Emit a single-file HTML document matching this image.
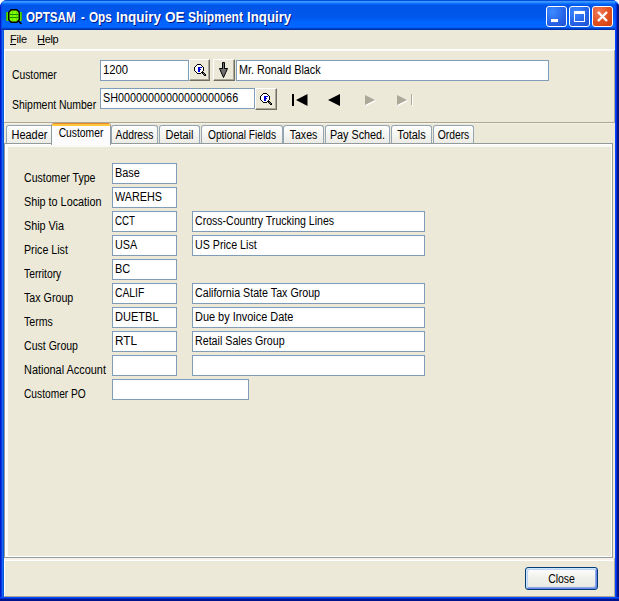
<!DOCTYPE html>
<html><head><meta charset="utf-8">
<style>
*{margin:0;padding:0;box-sizing:border-box}
html,body{width:619px;height:601px;overflow:hidden;background:#fff}
body{position:relative;font-family:"Liberation Sans",sans-serif;font-size:11px;color:#000}
.a{position:absolute}
.t{position:absolute;white-space:pre;line-height:13px}
.edit{position:absolute;background:#fff;border:1px solid #7f9db9;height:21px}
.edit span{position:absolute;left:2px;top:3px;white-space:pre;line-height:13px}
.btn{position:absolute;background:#ece9d8;border-top:1px solid #fff;border-left:1px solid #fff;border-right:1px solid #716f64;border-bottom:1px solid #716f64;box-shadow:inset -1px -1px #aca899}
.tab{position:absolute;top:125px;height:18px;border:1px solid #94a6b4;border-bottom:none;border-radius:3px 3px 0 0;background:linear-gradient(180deg,#fff,#f3f3ef 60%,#ecebe6)}
.tab span{position:absolute;left:0;right:0;text-align:center;top:3px;white-space:pre;line-height:13px}
.lbl{position:absolute;left:24px;white-space:pre;line-height:13px}
</style></head><body>
<div class="a" style="left:0;top:0;width:619px;height:601px;background:#0831d9;border-radius:7px 7px 0 0;overflow:hidden">
<div class="a" style="left:0;top:0;width:619px;height:30px;background:linear-gradient(180deg,#0050e0 0px,#0050e0 1px,#3d95ff 1px,#3d95ff 2px,#2d8bff 2px,#2d8bff 3px,#0a72ff 3px,#0a72ff 4px,#0062f2 4px,#0062f2 5px,#0055e8 5px,#0057ec 17px,#005cf4 19px,#0062fa 21px,#0066ff 22px,#0066ff 27px,#005cf4 27px,#005cf4 28px,#0044cc 28px,#0044cc 29px,#0030a8 29px,#0030a8 30px)"></div>
<div class="a" style="left:0;top:5px;width:1px;height:596px;background:#0019cf"></div>
<div class="a" style="left:1px;top:3px;width:1px;height:27px;background:#0838e0;opacity:.6"></div>
<div class="a" style="left:1px;top:30px;width:1px;height:571px;background:#0838e0"></div>
<div class="a" style="left:2px;top:30px;width:1px;height:571px;background:#166aee"></div>
<div class="a" style="left:3px;top:30px;width:1px;height:571px;background:#0855dd"></div>
<div class="a" style="left:615px;top:30px;width:1px;height:571px;background:#0048ff"></div>
<div class="a" style="left:616px;top:30px;width:1px;height:571px;background:#0030d8"></div>
<div class="a" style="left:617px;top:4px;width:2px;height:597px;background:#00138c"></div>
<div class="a" style="left:616px;top:3px;width:1px;height:27px;background:#0030d8"></div>
<div class="a" style="left:615px;top:2px;width:1px;height:28px;background:#0048ff;opacity:.7"></div>
<div class="a" style="left:0;top:597px;width:619px;height:1px;background:#0048ff"></div>
<div class="a" style="left:0;top:598px;width:619px;height:1px;background:#0030d0"></div>
<div class="a" style="left:0;top:599px;width:619px;height:2px;background:#00138c"></div>
<div class="a" style="left:4px;top:30px;width:611px;height:567px;background:#ece9d8"></div>
</div>
<svg class="a" style="left:0;top:0" width="30" height="30" viewBox="0 0 30 30">
<rect x="6" y="12" width="16" height="9" fill="#5cd800"/>
<rect x="6" y="12" width="1" height="9" fill="#2a9a00" opacity=".6"/>
<rect x="21" y="12" width="1" height="9" fill="#2a9a00" opacity=".6"/>
<path d="M11.2 9.75 H16.8 L19.25 12.2 V19.8 L16.8 22.25 H11.2 L8.75 19.8 V12.2 Z" fill="#80ff00" stroke="#000" stroke-width="1.5"/>
<rect x="9.5" y="14" width="9" height="1" fill="#128a00"/>
<rect x="9.5" y="17" width="9" height="1" fill="#128a00"/>
<rect x="12" y="11" width="1" height="10" fill="#48c000" opacity=".5"/>
<rect x="16" y="11" width="1" height="10" fill="#48c000" opacity=".5"/>
<path d="M18.5 21 L21.5 24" stroke="#000" stroke-width="1.6"/>
</svg>
<div class="t" style="left:27.10px;top:10px;font-weight:bold;font-size:14px;line-height:16px;color:#001a8c;transform:scaleX(0.827);transform-origin:0 0">OPTSAM</div>
<div class="t" style="left:26.10px;top:9px;font-weight:bold;font-size:14px;line-height:16px;color:#fff;transform:scaleX(0.827);transform-origin:0 0">OPTSAM</div>
<div class="t" style="left:82.40px;top:10px;font-weight:bold;font-size:14px;line-height:16px;color:#001a8c;transform:scaleX(0.8);transform-origin:0 0">-</div>
<div class="t" style="left:81.40px;top:9px;font-weight:bold;font-size:14px;line-height:16px;color:#fff;transform:scaleX(0.8);transform-origin:0 0">-</div>
<div class="t" style="left:89.70px;top:10px;font-weight:bold;font-size:14px;line-height:16px;color:#001a8c;transform:scaleX(0.837);transform-origin:0 0">Ops</div>
<div class="t" style="left:88.70px;top:9px;font-weight:bold;font-size:14px;line-height:16px;color:#fff;transform:scaleX(0.837);transform-origin:0 0">Ops</div>
<div class="t" style="left:116.53px;top:10px;font-weight:bold;font-size:14px;line-height:16px;color:#001a8c;transform:scaleX(0.965);transform-origin:0 0">Inquiry</div>
<div class="t" style="left:115.53px;top:9px;font-weight:bold;font-size:14px;line-height:16px;color:#fff;transform:scaleX(0.965);transform-origin:0 0">Inquiry</div>
<div class="t" style="left:165.90px;top:10px;font-weight:bold;font-size:14px;line-height:16px;color:#001a8c;transform:scaleX(0.97);transform-origin:0 0">OE</div>
<div class="t" style="left:164.90px;top:9px;font-weight:bold;font-size:14px;line-height:16px;color:#fff;transform:scaleX(0.97);transform-origin:0 0">OE</div>
<div class="t" style="left:189.34px;top:10px;font-weight:bold;font-size:14px;line-height:16px;color:#001a8c;transform:scaleX(0.862);transform-origin:0 0">Shipment</div>
<div class="t" style="left:188.34px;top:9px;font-weight:bold;font-size:14px;line-height:16px;color:#fff;transform:scaleX(0.862);transform-origin:0 0">Shipment</div>
<div class="t" style="left:247.75px;top:10px;font-weight:bold;font-size:14px;line-height:16px;color:#001a8c;transform:scaleX(0.948);transform-origin:0 0">Inquiry</div>
<div class="t" style="left:246.75px;top:9px;font-weight:bold;font-size:14px;line-height:16px;color:#fff;transform:scaleX(0.948);transform-origin:0 0">Inquiry</div>
<div class="a" style="left:546px;top:6px;width:21px;height:21px;border:1px solid #fff;border-radius:3px;background:radial-gradient(circle at 30% 25%,#3c8cff,#2662e8 60%,#1f4fd0)"></div>
<div class="a" style="left:551px;top:19px;width:7px;height:3px;background:#fff"></div>
<div class="a" style="left:569px;top:6px;width:21px;height:21px;border:1px solid #fff;border-radius:3px;background:radial-gradient(circle at 30% 25%,#3c8cff,#2662e8 60%,#1f4fd0)"></div>
<div class="a" style="left:574px;top:11px;width:11px;height:11px;border:1px solid #fff;border-top-width:3px"></div>
<div class="a" style="left:592px;top:6px;width:21px;height:21px;border:1px solid #fff;border-radius:3px;background:radial-gradient(circle at 30% 25%,#f07a58,#e2501f 55%,#cc3f12)"></div>
<svg class="a" style="left:592px;top:6px" width="21" height="21"><path d="M6 6 L15 15 M15 6 L6 15" stroke="#fff" stroke-width="2.4"/></svg>
<div class="t" style="left:10px;top:33px;letter-spacing:-0.23px">File</div>
<div class="a" style="left:10px;top:44px;width:6px;height:1px;background:#000"></div>
<div class="t" style="left:37px;top:33px;letter-spacing:-0.3px">Help</div>
<div class="a" style="left:38px;top:44px;width:7px;height:1px;background:#000"></div>
<div class="a" style="left:4px;top:49px;width:611px;height:1px;background:#fff"></div>
<div class="a" style="left:4px;top:50px;width:610px;height:1px;background:#fbfaf4"></div>
<div class="a" style="left:4px;top:122px;width:611px;height:1px;background:#aca899"></div>
<div class="a" style="left:614px;top:50px;width:1px;height:72px;background:#aca899"></div>
<div class="a" style="left:4px;top:50px;width:1px;height:72px;background:#fff"></div>
<div class="a" style="left:4px;top:123px;width:610px;height:1px;background:#f6f3e6"></div>
<div class="lbl" style="left:12px;top:69px;font-size:12px;transform:scaleX(0.860);transform-origin:0 0;">Customer</div>
<div class="lbl" style="left:12px;top:99px;font-size:12px;transform:scaleX(0.870);transform-origin:0 0;">Shipment Number</div>
<div class="edit" style="left:100px;top:60px;width:89px;height:21px"><span style="font-size:12px;transform:scaleX(0.940);transform-origin:0 0;">1200</span></div>
<div class="btn" style="left:189px;top:59px;width:21px;height:22px"></div>
<div class="btn" style="left:213px;top:59px;width:22px;height:22px"></div>
<div class="edit" style="left:236px;top:60px;width:313px;height:21px"><span style="font-size:12px;transform:scaleX(0.900);transform-origin:0 0;">Mr. Ronald Black</span></div>
<div class="edit" style="left:100px;top:88px;width:155px;height:21px"><span style="font-size:12px;transform:scaleX(0.900);transform-origin:0 0;">SH00000000000000000066</span></div>
<div class="btn" style="left:255px;top:88px;width:22px;height:22px"></div>
<svg class="a" style="left:189px;top:59px" width="22" height="22" viewBox="0 0 22 22" shape-rendering="crispEdges">
<path d="M8 5h4v1h1v1h1v1h1v4h-1v1h-1v1h-1v1h-4v-1h-1v-1h-1v-1h-1v-4h1v-1h1v-1h1z" fill="#fff"/>
<path d="M8 5h4v1h-4zM7 6h1v1h-1zM12 6h1v1h-1zM6 7h1v1h-1zM13 7h1v1h-1zM5 8h1v4h-1zM14 8h1v4h-1zM6 12h1v1h-1zM13 12h1v1h-1zM7 13h1v1h-1zM12 13h1v1h-1zM8 14h4v1h-4z" fill="#000"/>
<path d="M9 8h4v1h-2v1h1v1h-1v2h-2z" fill="#0000d8"/>
<path d="M13 13h2v1h1v1h1v2h-2v-1h-1v-1h-1z" fill="#000"/>
<path d="M14 14h1v1h-1zM15 15h1v1h-1z" fill="#808080"/>
</svg>
<svg class="a" style="left:255px;top:88px" width="22" height="22" viewBox="0 0 22 22" shape-rendering="crispEdges">
<path d="M8 5h4v1h1v1h1v1h1v4h-1v1h-1v1h-1v1h-4v-1h-1v-1h-1v-1h-1v-4h1v-1h1v-1h1z" fill="#fff"/>
<path d="M8 5h4v1h-4zM7 6h1v1h-1zM12 6h1v1h-1zM6 7h1v1h-1zM13 7h1v1h-1zM5 8h1v4h-1zM14 8h1v4h-1zM6 12h1v1h-1zM13 12h1v1h-1zM7 13h1v1h-1zM12 13h1v1h-1zM8 14h4v1h-4z" fill="#000"/>
<path d="M9 8h4v1h-2v1h1v1h-1v2h-2z" fill="#0000d8"/>
<path d="M13 13h2v1h1v1h1v2h-2v-1h-1v-1h-1z" fill="#000"/>
<path d="M14 14h1v1h-1zM15 15h1v1h-1z" fill="#808080"/>
</svg>
<svg class="a" style="left:213px;top:59px" width="22" height="22" viewBox="0 0 22 22">
<path d="M9.5 3.5 H11.5 V9.5 H14.5 L10.5 18.5 L6.5 9.5 H9.5 Z" fill="#707070" stroke="#000" stroke-width="1"/>
</svg>
<svg class="a" style="left:285px;top:88px" width="140" height="22" viewBox="0 0 140 22">
<rect x="7" y="6" width="2" height="12" fill="#000"/>
<path d="M11 12 L22.5 6 V18 Z" fill="#000"/>
<path d="M43 12 L55 6 V18 Z" fill="#000"/>
<path d="M81 8 L91 13 L81 18 Z" fill="#fff"/>
<path d="M80 7 L90 12 L80 17 Z" fill="#aca899"/>
<path d="M113 8 L123 13 L113 18 Z" fill="#fff"/>
<path d="M112 7 L122 12 L112 17 Z" fill="#aca899"/>
<rect x="127" y="7" width="1" height="11" fill="#fff"/>
<rect x="126" y="6" width="1" height="11" fill="#aca899"/>
</svg>
<div class="a" style="left:4px;top:143px;width:609px;height:415px;border:1px solid #919b9c;background:#fff"></div>
<div class="a" style="left:6px;top:145px;width:605px;height:411px;background:#fafaf7"></div>
<div class="a" style="left:8px;top:147px;width:603px;height:409px;background:#ece9d8"></div>
<div class="tab" style="left:6px;width:47px"><span style="font-size:12px;transform:scaleX(0.910);transform-origin:50% 0;">Header</span></div>
<div class="tab" style="left:111px;width:47px"><span style="font-size:12px;transform:scaleX(0.860);transform-origin:50% 0;">Address</span></div>
<div class="tab" style="left:159px;width:41px"><span style="font-size:12px;transform:scaleX(0.910);transform-origin:50% 0;">Detail</span></div>
<div class="tab" style="left:201px;width:82px"><span style="font-size:12px;transform:scaleX(0.850);transform-origin:50% 0;">Optional Fields</span></div>
<div class="tab" style="left:283px;width:41px"><span style="font-size:12px;transform:scaleX(0.880);transform-origin:50% 0;">Taxes</span></div>
<div class="tab" style="left:325px;width:65px"><span style="font-size:12px;transform:scaleX(0.900);transform-origin:50% 0;">Pay Sched.</span></div>
<div class="tab" style="left:391px;width:41px"><span style="font-size:12px;transform:scaleX(0.910);transform-origin:50% 0;">Totals</span></div>
<div class="tab" style="left:433px;width:41px"><span style="font-size:12px;transform:scaleX(0.860);transform-origin:50% 0;">Orders</span></div>
<div class="a" style="left:51px;top:123px;width:60px;height:22px;border:1px solid #919b9c;border-top:none;border-bottom:none;border-radius:3px 3px 0 0;background:#fcfcfe;overflow:hidden">
<div class="a" style="left:0;top:0;width:58px;height:1px;background:#e68b2c"></div>
<div class="a" style="left:0;top:1px;width:58px;height:2px;background:#ffc73c"></div>
<span class="t" style="left:0;right:0;text-align:center;top:4px;font-size:12px;transform:scaleX(0.860);transform-origin:50% 0;">Customer</span>
</div>
<div class="lbl" style="top:172px;font-size:12px;transform:scaleX(0.880);transform-origin:0 0;">Customer Type</div>
<div class="edit" style="left:112px;top:163px;width:65px;height:21px"><span style="font-size:12px;transform:scaleX(0.910);transform-origin:0 0;">Base</span></div>
<div class="lbl" style="top:196px;font-size:12px;transform:scaleX(0.900);transform-origin:0 0;">Ship to Location</div>
<div class="edit" style="left:112px;top:187px;width:65px;height:21px"><span style="font-size:12px;transform:scaleX(0.900);transform-origin:0 0;">WAREHS</span></div>
<div class="lbl" style="top:220px;font-size:12px;transform:scaleX(0.900);transform-origin:0 0;">Ship Via</div>
<div class="edit" style="left:112px;top:211px;width:65px;height:21px"><span style="font-size:12px;transform:scaleX(0.810);transform-origin:0 0;">CCT</span></div>
<div class="edit" style="left:192px;top:211px;width:233px;height:21px"><span style="font-size:12px;transform:scaleX(0.880);transform-origin:0 0;">Cross-Country Trucking Lines</span></div>
<div class="lbl" style="top:244px;font-size:12px;transform:scaleX(0.890);transform-origin:0 0;">Price List</div>
<div class="edit" style="left:112px;top:235px;width:65px;height:21px"><span style="font-size:12px;transform:scaleX(0.900);transform-origin:0 0;">USA</span></div>
<div class="edit" style="left:192px;top:235px;width:233px;height:21px"><span style="font-size:12px;transform:scaleX(0.890);transform-origin:0 0;">US Price List</span></div>
<div class="lbl" style="top:268px;font-size:12px;transform:scaleX(0.860);transform-origin:0 0;">Territory</div>
<div class="edit" style="left:112px;top:259px;width:65px;height:21px"><span style="font-size:12px;transform:scaleX(0.910);transform-origin:0 0;">BC</span></div>
<div class="lbl" style="top:292px;font-size:12px;transform:scaleX(0.890);transform-origin:0 0;">Tax Group</div>
<div class="edit" style="left:112px;top:283px;width:65px;height:21px"><span style="font-size:12px;transform:scaleX(0.860);transform-origin:0 0;">CALIF</span></div>
<div class="edit" style="left:192px;top:283px;width:233px;height:21px"><span style="font-size:12px;transform:scaleX(0.890);transform-origin:0 0;">California State Tax Group</span></div>
<div class="lbl" style="top:316px;font-size:12px;transform:scaleX(0.880);transform-origin:0 0;">Terms</div>
<div class="edit" style="left:112px;top:307px;width:65px;height:21px"><span style="font-size:12px;transform:scaleX(0.920);transform-origin:0 0;">DUETBL</span></div>
<div class="edit" style="left:192px;top:307px;width:233px;height:21px"><span style="font-size:12px;transform:scaleX(0.910);transform-origin:0 0;">Due by Invoice Date</span></div>
<div class="lbl" style="top:340px;font-size:12px;transform:scaleX(0.880);transform-origin:0 0;">Cust Group</div>
<div class="edit" style="left:112px;top:331px;width:65px;height:21px"><span style="font-size:12px;transform:scaleX(0.980);transform-origin:0 0;">RTL</span></div>
<div class="edit" style="left:192px;top:331px;width:233px;height:21px"><span style="font-size:12px;transform:scaleX(0.890);transform-origin:0 0;">Retail Sales Group</span></div>
<div class="lbl" style="top:364px;font-size:12px;transform:scaleX(0.910);transform-origin:0 0;">National Account</div>
<div class="edit" style="left:112px;top:355px;width:65px;height:21px"><span style=""></span></div>
<div class="edit" style="left:192px;top:355px;width:233px;height:21px"><span style=""></span></div>
<div class="lbl" style="top:388px;font-size:12px;transform:scaleX(0.850);transform-origin:0 0;">Customer PO</div>
<div class="edit" style="left:112px;top:379px;width:137px;height:21px"><span style=""></span></div>
<div class="a" style="left:4px;top:558px;width:610px;height:2px;background:#f4f2ea"></div>
<div class="a" style="left:4px;top:560px;width:610px;height:1px;background:#fff"></div>
<div class="a" style="left:4px;top:560px;width:1px;height:37px;background:#fff"></div>
<div class="a" style="left:4px;top:596px;width:611px;height:1px;background:#aca899"></div>
<div class="a" style="left:614px;top:558px;width:1px;height:39px;background:#aca899"></div>
<div class="a" style="left:525px;top:567px;width:73px;height:23px;border:1px solid #003c74;border-radius:3px;background:linear-gradient(180deg,#fff,#f0f0ea 50%,#ecebe6 85%,#d6d0c5);box-shadow:inset 1px 1px #cee7ff,inset -1px -1px #6982ee,inset 2px 2px #bcd4f6,inset -2px -2px #89ade4">
<span class="t" style="left:0;right:0;text-align:center;top:5px;font-size:12px;transform:scaleX(0.870);transform-origin:50% 0;">Close</span>
</div>
</body></html>
